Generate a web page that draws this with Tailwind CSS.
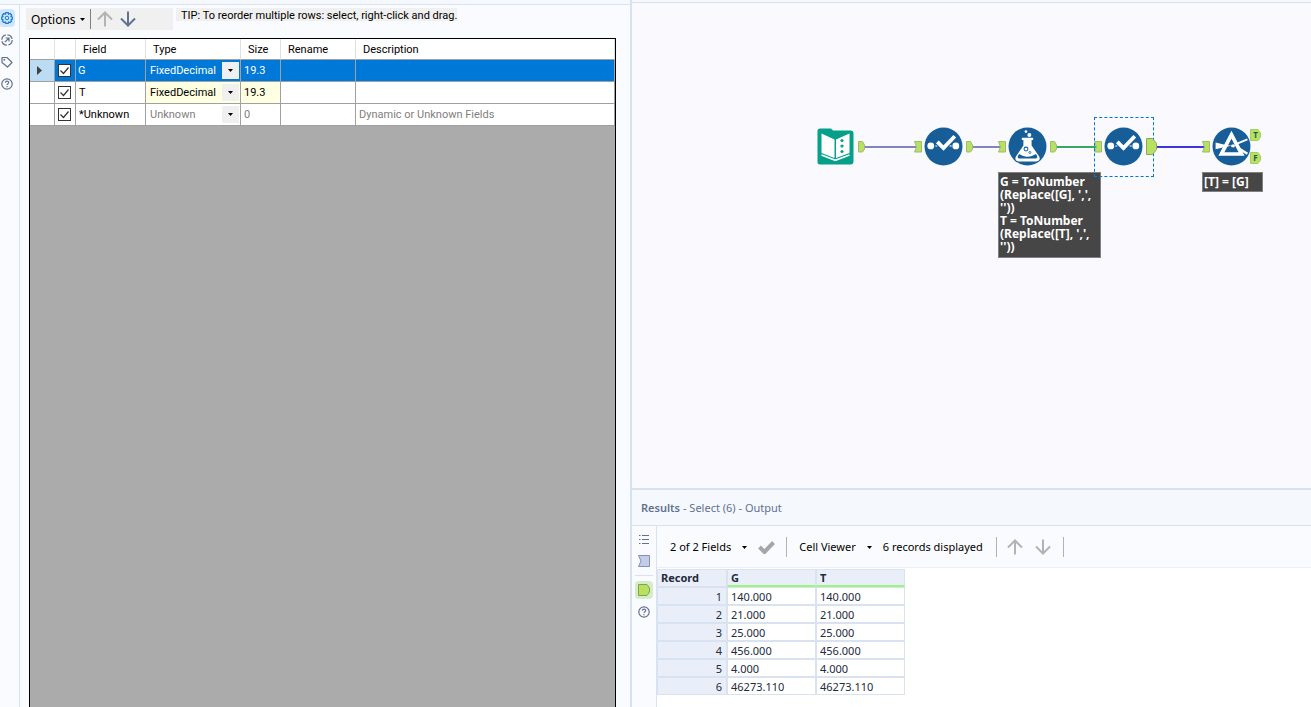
<!DOCTYPE html>
<html lang="en">

<head>
    <meta charset="UTF-8">
    <meta name="viewport" content="width=device-width, initial-scale=1.0">
    <script src="https://cdn.jsdelivr.net/npm/@tailwindcss/browser@4"></script>
    <title>Select (6) - Configuration</title>
</head>

<body class="h-screen overflow-hidden bg-[#fafbfe] font-['Noto_Sans',sans-serif] text-[11px] text-black">
    <svg class="hidden">
        <defs>
            <symbol id="caret" viewBox="0 0 5 3">
                <path d="M0 0h5L2.500 3z" fill="currentColor" />
            </symbol>
            <symbol id="up" viewBox="0 0 16 16">
                <path d="M8 15.500V1.500M1 8.500L8 1.500l7 7" fill="none" stroke="currentColor" stroke-width="2" />
            </symbol>
            <symbol id="down" viewBox="0 0 16 16">
                <path d="M8 .5v14M1 7.500l7 7 7-7" fill="none" stroke="currentColor" stroke-width="2" />
            </symbol>
            <symbol id="help" viewBox="0 0 12 12">
                <circle cx="6" cy="6" r="5.200" fill="none" stroke="currentColor" stroke-width="1.200" />
                <path d="M4.400 4.800c0-2.200 3.300-2 3.300-.2C7.700 5.700 6 5.700 6 7.100M6 8.100v1.100" fill="none" stroke="currentColor" stroke-width="1.200" />
            </symbol>
            <symbol id="in" viewBox="0 0 8 12">
                <path d="M.5.500h7v10.500h-7L2.500 6z" fill="#b9e060" stroke="#9dbd6c" />
            </symbol>
            <symbol id="out" viewBox="0 0 7 12">
                <path d="M.5.500H4.500L6.500 4v4L4.500 11H.5z" fill="#b9e060" stroke="#9dbd6c" />
            </symbol>
            <symbol id="tag" viewBox="0 0 11 12">
                <path d="M.5.500H8L10.500 4v4L8 11.500H.5z" fill="#b9e060" stroke="#a5cf62" />
            </symbol>
            <symbol id="select" viewBox="0 0 38 38">
                <circle cx="19" cy="19" r="18.500" fill="#175e99" />
                <circle cx="6.600" cy="18.500" r="3.300" fill="#fff" />
                <circle cx="31" cy="18.500" r="3.300" fill="#fff" />
                <path d="M11 18.500h2M25 18.500h2" stroke="#fff" />
                <path d="M13 14.500l6 6L30 9" fill="none" stroke="#fff" stroke-width="3.800" />
            </symbol>
        </defs>
    </svg>

    <div class="grid h-full grid-cols-[630fr_681fr]">
        <!-- configuration pane -->
        <section class="flex min-w-0 flex-col">
            <div class="h-[5px] shrink-0 border-b border-[#d9e2f1] bg-[#f5f9fe]"></div>
            <div class="flex min-h-0 flex-1">
                <nav class="flex w-5 shrink-0 flex-col items-center gap-1 border-r border-[#d9e2f1] pt-1 pr-[5px] text-[#62718f]">
                    <button aria-label="Configuration" class="flex h-[18px] w-4 items-center justify-center rounded-sm bg-[#cfe6fb] text-[#1b7bd0]">
                        <svg class="size-3" viewBox="0 0 12 12" fill="none" stroke="currentColor">
                            <path d="M4.800.7h2.400l.4 1.400 1.500-.6 1.500 1.700-.6 1.300 1.300.6v2l-1.300.6.6 1.300-1.500 1.600-1.500-.6-.4 1.300H4.800l-.4-1.300-1.500.6L1.400 9l.6-1.300-1.300-.6v-2L2 4.500l-.6-1.300 1.500-1.700 1.500.6z" stroke-width="1.300" />
                            <circle cx="6" cy="6" r="1.800" />
                        </svg>
                    </button>
                    <button aria-label="Navigation" class="flex h-[18px] w-4 items-center justify-center">
                        <svg class="size-3" viewBox="0 0 12 12" fill="none" stroke="currentColor" stroke-width="1.200">
                            <circle cx="6" cy="6" r="5.200" stroke-dasharray="6.500 1.600" />
                            <path d="M3.800 8.200L8 4M4.600 4H8v3.400" />
                        </svg>
                    </button>
                    <button aria-label="Annotation" class="flex h-[18px] w-4 items-center justify-center">
                        <svg class="size-3" viewBox="0 0 12 12" fill="none" stroke="currentColor" stroke-width="1.200">
                            <path d="M1 1.500h5l5 5-4.500 4.500L1 6.500z" stroke-linejoin="round" />
                            <circle cx="3.300" cy="3.700" r=".4" />
                        </svg>
                    </button>
                    <button aria-label="Help" class="flex h-[18px] w-4 items-center justify-center">
                        <svg class="size-3"><use href="#help" /></svg>
                    </button>
                </nav>

                <div class="flex min-w-0 flex-1 flex-col pt-[3px] pr-[14px] pl-[9px] font-['Roboto',sans-serif]">
                    <div class="-ml-[3px] flex items-start gap-[3px]">
                        <div class="flex h-[22px] w-[147px] items-center bg-[#f0f0f0]">
                            <button class="flex items-center gap-1 pt-px pl-[5px] font-['Noto_Sans',sans-serif] text-xs">Options
                                <svg class="h-[3px] w-[5px]"><use href="#caret" /></svg>
                            </button>
                            <div class="mr-[6px] ml-[5px] h-5 border-l border-[#808080]"></div>
                            <button aria-label="Move up" class="mr-[7px] text-[#b3b3b3]"><svg class="size-4"><use href="#up" /></svg></button>
                            <button aria-label="Move down" class="text-[#62718f]"><svg class="size-4"><use href="#down" /></svg></button>
                        </div>
                        <p class="h-[13px] bg-[#f0f0f0] pl-[5px] leading-4">TIP: To reorder multiple rows: select, right-click and drag.</p>
                    </div>

                    <div class="mt-2 flex-1 border border-b-0 border-black bg-[#ababab]">
                        <table class="w-full table-fixed border-separate border-spacing-0 bg-white text-left">
                            <colgroup>
                                <col class="w-[25px]">
                                <col class="w-[21px]">
                                <col class="w-[70px]">
                                <col class="w-[95px]">
                                <col class="w-[40px]">
                                <col class="w-[75px]">
                                <col>
                            </colgroup>
                            <thead>
                                <tr class="h-[21px] *:border-r *:border-b *:border-r-[#e0e0e0] *:border-b-[#a0a0a0] *:p-0 *:pt-[3px] *:pl-[7px] *:font-normal">
                                    <th></th>
                                    <th></th>
                                    <th>Field</th>
                                    <th>Type</th>
                                    <th>Size</th>
                                    <th>Rename</th>
                                    <th>Description</th>
                                </tr>
                            </thead>
                            <tbody>
                                <tr class="h-[22px] bg-[#0078d7] text-white *:border-r *:border-b *:border-[#a0a0a0] *:p-0">
                                    <td class="bg-[#bcdcf4]">
                                        <svg class="ml-[7px] h-[9px] w-[5px]" viewBox="0 0 5 9"><path d="M0 0l5 4.500L0 9z" fill="#404040" /></svg>
                                    </td>
                                    <td>
                                        <label class="relative ml-[3px] block size-[13px]">
                                            <input type="checkbox" checked aria-label="Select G" class="block size-[13px] appearance-none border border-[#333] bg-white">
                                            <svg class="absolute inset-0 size-[13px]" viewBox="0 0 13 13"><path d="M2.500 6.500l3 3 5-6" fill="none" stroke="#333" stroke-width="1.200" /></svg>
                                        </label>
                                    </td>
                                    <td><span class="block pt-0.5 pl-0.5">G</span></td>
                                    <td>
                                        <div class="relative flex h-[21px] items-center">
                                            <select aria-label="Type of G" class="h-[21px] w-full appearance-none pt-0.5 pl-1"><option>FixedDecimal</option></select>
                                            <span class="pointer-events-none absolute top-0.5 right-px flex h-[17px] w-[17px] items-center justify-center bg-[#f0f0f0] text-black"><svg class="h-[3px] w-[5px]"><use href="#caret" /></svg></span>
                                        </div>
                                    </td>
                                    <td><span class="block pt-0.5 pl-[3px]">19.3</span></td>
                                    <td></td>
                                    <td></td>
                                </tr>
                                <tr class="h-[22px] *:border-r *:border-b *:border-[#a0a0a0] *:p-0">
                                    <td></td>
                                    <td>
                                        <label class="relative ml-[3px] block size-[13px]">
                                            <input type="checkbox" checked aria-label="Select T" class="block size-[13px] appearance-none border border-[#333] bg-white">
                                            <svg class="absolute inset-0 size-[13px]" viewBox="0 0 13 13"><path d="M2.500 6.500l3 3 5-6" fill="none" stroke="#333" stroke-width="1.200" /></svg>
                                        </label>
                                    </td>
                                    <td><span class="block pt-0.5 pl-[3px]">T</span></td>
                                    <td class="bg-[#ffffe1]">
                                        <div class="relative flex h-[21px] items-center">
                                            <select aria-label="Type of T" class="h-[21px] w-full appearance-none pt-0.5 pl-1"><option>FixedDecimal</option></select>
                                            <span class="pointer-events-none absolute top-0.5 right-px flex h-[17px] w-[17px] items-center justify-center bg-[#f0f0f0] text-black"><svg class="h-[3px] w-[5px]"><use href="#caret" /></svg></span>
                                        </div>
                                    </td>
                                    <td class="bg-[#ffffe1]"><span class="block pt-0.5 pl-[3px]">19.3</span></td>
                                    <td></td>
                                    <td></td>
                                </tr>
                                <tr class="h-[22px] *:border-r *:border-b *:border-[#a0a0a0] *:p-0">
                                    <td></td>
                                    <td>
                                        <label class="relative ml-[3px] block size-[13px]">
                                            <input type="checkbox" checked aria-label="Select unknown fields" class="block size-[13px] appearance-none border border-[#333] bg-white">
                                            <svg class="absolute inset-0 size-[13px]" viewBox="0 0 13 13"><path d="M2.500 6.500l3 3 5-6" fill="none" stroke="#333" stroke-width="1.200" /></svg>
                                        </label>
                                    </td>
                                    <td><span class="block pt-0.5 pl-[3px]">*Unknown</span></td>
                                    <td class="text-[#808080]">
                                        <div class="relative flex h-[21px] items-center">
                                            <select aria-label="Type of unknown fields" class="h-[21px] w-full appearance-none pt-0.5 pl-1"><option>Unknown</option></select>
                                            <span class="pointer-events-none absolute top-0.5 right-px flex h-[17px] w-[17px] items-center justify-center bg-[#f0f0f0] text-black"><svg class="h-[3px] w-[5px]"><use href="#caret" /></svg></span>
                                        </div>
                                    </td>
                                    <td class="text-[#808080]"><span class="block pt-0.5 pl-[3px]">0</span></td>
                                    <td></td>
                                    <td class="text-[#808080]"><span class="block pt-0.5 pl-[3px]">Dynamic or Unknown Fields</span></td>
                                </tr>
                            </tbody>
                        </table>
                    </div>
                </div>
            </div>
        </section>

        <div class="flex min-w-0 flex-col border-l-2 border-[#d9e2f1]">
            <!-- workflow canvas -->
            <main class="relative min-h-0 flex-1 overflow-hidden bg-[#f9f9fe]">
                <div class="h-[3px] border-b border-[#d9e2f1] bg-[#f5f9fe]"></div>
                <svg class="absolute top-0 left-0 h-[300px] w-[679px]" viewBox="0 0 679 300" fill="none" stroke-width="2">
                    <path d="M232 147h56M340 147h32" stroke="#8484bb" />
                    <path d="M424 147h42" stroke="#3aa564" />
                    <path d="M524 147h50" stroke="#3a35e0" />
                </svg>

                <!-- input data -->
                <svg class="absolute top-[128px] left-[185px] h-[37px] w-[37px]" viewBox="0 0 37 37">
                    <path d="M3 .5h11l2 2h17.500a3 3 0 013 3v28a3 3 0 01-3 3H3a2.500 2.500 0 01-2.500-2.500V3A2.500 2.500 0 013 .5z" fill="#06a08a" />
                    <path d="M4.500 5.500l13 6v18.500l-13-5z" fill="#fff" />
                    <path d="M19 11.500l13.500-6V25L19 30z" fill="#fff" />
                    <path d="M4.500 27l13.800 5.300L32.500 27" fill="none" stroke="#fff" stroke-width="1.600" />
                    <g fill="#06a08a">
                        <circle cx="25" cy="12.500" r="1.600" />
                        <circle cx="25" cy="18" r="1.600" />
                        <circle cx="25" cy="23.500" r="1.600" />
                    </g>
                </svg>
                <svg class="absolute top-[141px] left-[226px] h-3 w-[7px]"><use href="#out" /></svg>

                <!-- select -->
                <svg class="absolute top-[141px] left-[282px] h-3 w-2"><use href="#in" /></svg>
                <svg class="absolute top-[127px] left-[292px] size-[39px]"><use href="#select" /></svg>
                <svg class="absolute top-[141px] left-[334px] h-3 w-[7px]"><use href="#out" /></svg>

                <!-- formula -->
                <svg class="absolute top-[141px] left-[366px] h-3 w-2"><use href="#in" /></svg>
                <svg class="absolute top-[127px] left-[376px] size-[39px]" viewBox="0 0 38 38">
                    <circle cx="19" cy="19" r="18.500" fill="#175e99" />
                    <circle cx="17.500" cy="4.500" r="1.300" fill="#fff" />
                    <circle cx="20.800" cy="7.800" r="1.900" fill="#fff" />
                    <path d="M13.500 10.500h11v2.200h-1.500v5.300l7.200 10.500c1.600 2.600.4 5-2.400 5H10.300c-2.800 0-4-2.400-2.400-5L15 18v-5.300h-1.500z" fill="#fff" />
                    <path d="M10.800 26.300c2.500 1.600 5.500 2.600 8.200 2.600s5.800-1 8.200-2.600l1 1.800c.8 1.600.2 2.700-1.500 2.700H11.300c-1.700 0-2.300-1.100-1.500-2.700z" fill="#175e99" />
                    <circle cx="17.500" cy="21.500" r="1.900" fill="#fff" stroke="#175e99" />
                    <circle cx="21.300" cy="24.800" r="1" fill="#fff" stroke="#175e99" stroke-width=".8" />
                </svg>
                <svg class="absolute top-[141px] left-[418px] h-3 w-[7px]"><use href="#out" /></svg>
                <p class="absolute top-[172px] left-[366px] w-[103px] border border-[#808080] bg-[#464646] px-px pt-0.5 pb-1 text-xs leading-[13px] font-bold whitespace-nowrap text-white">G = ToNumber<br>(Replace([G], ',',<br>''))<br>T = ToNumber<br>(Replace([T], ',',<br>''))</p>

                <!-- selected tool -->
                <svg class="absolute top-[141px] left-[462px] h-3 w-2"><use href="#in" /></svg>
                <svg class="absolute top-[127px] left-[472px] size-[39px]"><use href="#select" /></svg>
                <div class="absolute top-[117px] left-[462px] h-[60px] w-[60px] border border-dashed border-[#0078d7]"></div>
                <svg class="absolute top-[138px] left-[514px] h-[17px] w-[11px]" viewBox="0 0 11 17"><path d="M.5.500h6l4 5v6l-4 5h-6z" fill="#b9e060" stroke="#8aab55" /></svg>

                <!-- filter -->
                <svg class="absolute top-[141px] left-[570px] h-3 w-2"><use href="#in" /></svg>
                <svg class="absolute top-[127px] left-[580px] size-[39px]" viewBox="0 0 38 38">
                    <circle cx="19" cy="19" r="18.500" fill="#175e99" />
                    <path d="M19 7.500L9.200 26.300h19.600z" fill="none" stroke="#fff" stroke-width="3.600" />
                    <path d="M3.500 15l9 2.200 6.500 1-6.500 1.200-9 2.400z" fill="#fff" />
                    <path d="M19 18.300l3 -.6M25 16l9.500-4" stroke="#fff" stroke-width="1.800" />
                    <path d="M19 18.300l3 .6M25.500 20.500l9 5.500" stroke="#fff" stroke-width="2.400" />
                </svg>
                <div class="absolute top-[129px] left-[618px] flex h-3 w-[11px] items-center justify-center text-[8px] font-bold text-[#175e50]">
                    <svg class="absolute inset-0 h-3 w-[11px]"><use href="#tag" /></svg>
                    <span class="relative">T</span>
                </div>
                <div class="absolute top-[152px] left-[618px] flex h-3 w-[11px] items-center justify-center text-[8px] font-bold text-[#175e50]">
                    <svg class="absolute inset-0 h-3 w-[11px]"><use href="#tag" /></svg>
                    <span class="relative">F</span>
                </div>
                <p class="absolute top-[172px] left-[570px] w-[61px] border border-[#808080] bg-[#464646] px-px pt-0.5 pb-[3px] text-xs leading-[13px] font-bold text-white">[T] = [G]</p>
            </main>

            <!-- results pane -->
            <section class="flex h-[219px] shrink-0 flex-col border-t-2 border-[#d9e2f1]">
                <h2 class="flex h-9 items-center gap-[3px] border-b border-[#d9e2f1] bg-[#f5f9fe] pt-0.5 pl-[9px] text-[#62718f]"><span class="font-semibold">Results</span> - Select (6) - Output</h2>
                <div class="flex min-h-0 flex-1">
                    <nav class="flex w-[25px] shrink-0 flex-col items-center border-r border-[#d9e2f1] pt-1 text-[#62718f]">
                        <button aria-label="Messages" class="flex h-[18px] w-[18px] items-center justify-center">
                            <svg class="size-3" viewBox="0 0 12 12" stroke="currentColor"><path d="M1 2.500h1.500M4 2.500h7M1 6.500h1.500M4 6.500h7M1 10.500h1.500M4 10.500h7" /></svg>
                        </button>
                        <button aria-label="Input" class="mt-1 flex h-[18px] w-[18px] items-center justify-center">
                            <svg class="size-3" viewBox="0 0 12 12"><path d="M.5.500h11v11H.5L3 6z" fill="#c3cee6" stroke="#7f92bd" /></svg>
                        </button>
                        <div class="my-[5px] w-[18px] border-t border-[#d9e2f1]"></div>
                        <button aria-label="Output" class="flex h-[18px] w-[18px] items-center justify-center rounded-sm bg-[#d5eccb]">
                            <svg class="size-3" viewBox="0 0 12 12"><path d="M.5.500H9l2.500 3.500v4L9 11.500H.5z" fill="#b9e060" stroke="#7fa54c" /></svg>
                        </button>
                        <button aria-label="Help" class="mt-1 flex h-[18px] w-[18px] items-center justify-center">
                            <svg class="size-3"><use href="#help" /></svg>
                        </button>
                    </nav>
                    <div class="min-w-0 flex-1 bg-white">
                        <div class="flex h-[42px] items-center border-b border-[#eceff6] bg-[#fafbfe] pt-px pl-[13px] whitespace-nowrap">
                            <button class="flex items-center gap-[11px]">2 of 2 Fields <svg class="h-[3px] w-[5px]"><use href="#caret" /></svg></button>
                            <button aria-label="Apply" class="ml-[11px]"><svg class="h-[13px] w-[17px]" viewBox="0 0 17 13"><path d="M1.500 6l5 5 9-9.500" fill="none" stroke="#a6a6a6" stroke-width="4" /></svg></button>
                            <div class="mr-3 ml-[11px] h-5 border-l border-[#b3b3b3]"></div>
                            <button class="flex items-center gap-[11px]">Cell Viewer <svg class="h-[3px] w-[5px]"><use href="#caret" /></svg></button>
                            <span class="ml-[11px]">6 records displayed</span>
                            <div class="mr-[10px] ml-[13px] h-5 border-l border-[#b3b3b3]"></div>
                            <button aria-label="Previous" class="mr-3 text-[#b3b3b3]"><svg class="size-4"><use href="#up" /></svg></button>
                            <button aria-label="Next" class="mr-3 text-[#b3b3b3]"><svg class="size-4"><use href="#down" /></svg></button>
                            <div class="h-5 border-l border-[#b3b3b3]"></div>
                        </div>
                        <table class="mt-px table-fixed border-separate border-spacing-0 text-left text-[11px] leading-[15px] text-[#222b3c]">
                            <colgroup>
                                <col class="w-[70px]">
                                <col class="w-[89px]">
                                <col class="w-[89px]">
                            </colgroup>
                            <thead>
                                <tr class="h-[18px] bg-[#eaeef8] align-top">
                                    <th class="border border-[#d9e2f1] p-0 pl-[3px]">Record</th>
                                    <th class="border border-b-2 border-[#d9e2f1] border-b-[#9bf77c] p-0 pl-[3px]">G</th>
                                    <th class="border border-b-2 border-[#d9e2f1] border-b-[#9bf77c] p-0 pl-[3px]">T</th>
                                </tr>
                            </thead>
                            <tbody id="rows"></tbody>
                        </table>
                    </div>
                </div>
            </section>
        </div>
    </div>

    <script>
        const values = ['140.000', '21.000', '25.000', '456.000', '4.000', '46273.110'];
        let rows = '';
        values.forEach((value, i) => {
            rows += `
                <tr class="h-[18px] *:border *:border-[#d9e2f1] *:p-0">
                    <td class="bg-[#eaeef8] text-right"><span class="block pr-1">${i + 1}</span></td>
                    <td><span class="block pt-px pl-[3px]">${value}</span></td>
                    <td><span class="block pt-px pl-[3px]">${value}</span></td>
                </tr>`;
        });
        document.getElementById('rows').innerHTML = rows;
    </script>
</body>

</html>
